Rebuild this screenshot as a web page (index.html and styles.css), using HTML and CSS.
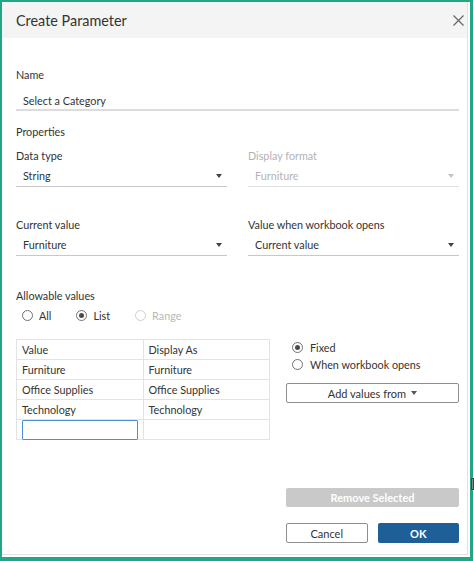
FILE: index.html
```html
<!DOCTYPE html>
<html>
<head>
<meta charset="utf-8">
<link rel="stylesheet" href="styles.css">
</head>
<body>
<div class="page">
  <div class="frame">
    <div class="dialog">
      <header class="titlebar">
        <span class="title">Create Parameter</span>
        <span class="close"><svg width="11" height="11" viewBox="0 0 11 11"><path d="M0.5 0.5 L10.5 10.5 M10.5 0.5 L0.5 10.5" stroke="#666" stroke-width="1.2" fill="none"/></svg></span>
      </header>
      <div class="body">
        <div class="label name-label">Name</div>
        <div class="text-input">Select a Category</div>
        <div class="label section">Properties</div>
        <div class="grid2">
          <div class="field">
            <div class="label">Data type</div>
            <div class="select"><span>String</span><span class="caret"></span></div>
          </div>
          <div class="field disabled">
            <div class="label">Display format</div>
            <div class="select"><span>Furniture</span><span class="caret"></span></div>
          </div>
          <div class="field">
            <div class="label">Current value</div>
            <div class="select"><span>Furniture</span><span class="caret"></span></div>
          </div>
          <div class="field">
            <div class="label">Value when workbook opens</div>
            <div class="select"><span>Current value</span><span class="caret"></span></div>
          </div>
        </div>
        <div class="label allow-label">Allowable values</div>
        <div class="radios">
          <span class="opt"><span class="radio"></span>All</span>
          <span class="opt"><span class="radio checked"></span>List</span>
          <span class="opt off"><span class="radio"></span>Range</span>
        </div>
        <div class="list-area">
          <div class="vtable">
            <div class="cell">Value</div><div class="cell">Display As</div>
            <div class="cell">Furniture</div><div class="cell">Furniture</div>
            <div class="cell">Office Supplies</div><div class="cell">Office Supplies</div>
            <div class="cell">Technology</div><div class="cell">Technology</div>
            <div class="cell edit"><span class="edit-box"></span></div><div class="cell"></div>
          </div>
          <div class="side">
            <div class="side-opt"><span class="radio checked"></span>Fixed</div>
            <div class="side-opt"><span class="radio"></span>When workbook opens</div>
            <div class="btn outline add">Add values from <span class="caret"></span></div>
          </div>
        </div>
        <div class="footer">
          <div class="btn remove">Remove Selected</div>
          <div class="btn-row">
            <div class="btn outline">Cancel</div>
            <div class="btn primary">OK</div>
          </div>
        </div>
      </div>
    </div>
  </div>
  <span class="cursor-mark"></span>
</div>
</body>
</html>
```

FILE: styles.css
```css
body {
  margin: 0;
  font-family: Lato, "Liberation Sans", sans-serif;
  font-size: 10.8px;
  color: #333;
  background: #fff;
}
.page {
  position: relative;
  width: 474px;
  height: 561px;
  background: #fff;
}
.frame {
  width: 473px;
  height: 561px;
  box-sizing: border-box;
  border-style: solid;
  border-color: #1fa787;
  border-width: 2px 3px 4px 2px;
  display: flex;
}
.dialog {
  flex: 1;
  margin: 0 2px 2px 0;
  border-right: 1px solid #e2e2e2;
  border-bottom: 1px solid #e2e2e2;
  display: flex;
  flex-direction: column;
  background: #fff;
}
.titlebar {
  height: 36px;
  flex: none;
  background: #f4f4f4;
  display: flex;
  align-items: center;
  justify-content: space-between;
  padding: 0 3px 0 14px;
}
.title {
  font-size: 14.4px;
  color: #333;
}
.close {
  display: flex;
}
.body {
  flex: 1;
  display: flex;
  flex-direction: column;
  padding: 0 8px 11px 14px;
}
.label {
  line-height: 14px;
}
.name-label {
  margin-top: 30px;
}
.text-input {
  margin-top: 4px;
  padding: 7px 7px 0;
  line-height: 16px;
  border-bottom: 2px solid #dcdcdc;
}
.section {
  margin-top: 14px;
}
.grid2 {
  display: grid;
  grid-template-columns: 1fr 1fr;
  column-gap: 21px;
  row-gap: 31px;
  margin-top: 10px;
}
.select {
  display: flex;
  justify-content: space-between;
  align-items: center;
  padding: 5px 5px 2px 7px;
  line-height: 16px;
  border-bottom: 1px solid #c8c8c8;
}
.caret {
  width: 0;
  height: 0;
  border-left: 3px solid transparent;
  border-right: 3px solid transparent;
  border-top: 4px solid #444;
}
.disabled .label,
.disabled .select {
  color: #b3b3b3;
}
.disabled .select {
  border-bottom-color: #e0e0e0;
}
.disabled .caret {
  border-top-color: #c4c4c4;
}
.allow-label {
  margin-top: 33px;
}
.radios {
  display: flex;
  align-items: center;
  height: 16px;
  margin-top: 4px;
  padding-left: 6px;
  gap: 25px;
}
.opt {
  display: flex;
  align-items: center;
  gap: 6px;
}
.opt.off {
  color: #b8b8b8;
}
.radio {
  width: 9px;
  height: 9px;
  border: 1px solid #707070;
  border-radius: 50%;
  display: flex;
  align-items: center;
  justify-content: center;
  background: #fff;
}
.opt.off .radio {
  border-color: #cfcfcf;
}
.radio.checked::after {
  content: "";
  width: 5px;
  height: 5px;
  border-radius: 50%;
  background: #4a4a4a;
}
.list-area {
  display: flex;
  gap: 16px;
  margin-top: 16px;
}
.vtable {
  width: 254px;
  box-sizing: border-box;
  display: grid;
  grid-template-columns: 1fr 1fr;
  border-top: 1px solid #e3e3e3;
  border-left: 1px solid #e3e3e3;
}
.cell {
  height: 19px;
  line-height: 19px;
  padding-left: 5px;
  border-right: 1px solid #e3e3e3;
  border-bottom: 1px solid #e3e3e3;
  white-space: nowrap;
}
.cell.edit {
  padding: 0 5px;
  display: flex;
}
.edit-box {
  flex: 1;
  box-sizing: border-box;
  height: 20px;
  border: 1px solid #4f8fcf;
  border-radius: 1px;
  background: #fff;
}
.side {
  flex: 1;
  display: flex;
  flex-direction: column;
}
.side-opt {
  display: flex;
  align-items: center;
  gap: 7px;
  height: 17px;
  padding-left: 6px;
}
.btn {
  display: flex;
  align-items: center;
  justify-content: center;
  box-sizing: border-box;
  height: 20px;
  border-radius: 2px;
  font-size: 11px;
}
.btn.outline {
  border: 1px solid #8e8e8e;
  background: #fff;
  color: #333;
}
.btn.add {
  margin-top: 10px;
  gap: 5px;
}
.btn.add .caret {
  border-top-color: #555;
}
.footer {
  margin-top: auto;
  margin-left: auto;
  width: 173px;
  display: flex;
  flex-direction: column;
  gap: 16px;
}
.btn.remove {
  height: 19px;
  background: #c9c9c9;
  color: #fff;
  font-weight: bold;
}
.btn-row {
  display: grid;
  grid-template-columns: 1fr 1fr;
  column-gap: 10px;
}
.btn.primary {
  background: #1d5f96;
  color: #fff;
  font-weight: bold;
}
.cursor-mark {
  position: absolute;
  left: 471px;
  top: 478px;
  width: 3px;
  height: 12px;
  box-sizing: border-box;
  border: 1px solid #444;
  background: #8a8a8a;
}
```
